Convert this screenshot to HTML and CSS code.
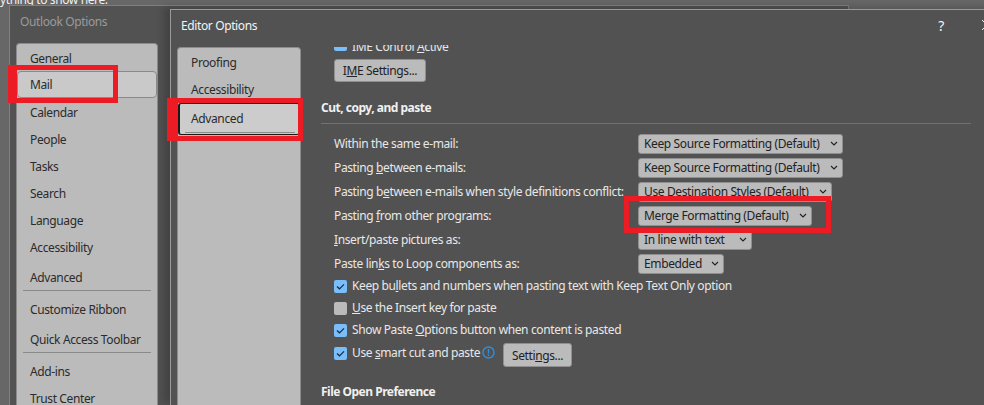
FILE: index.html
```html
<!DOCTYPE html>
<html lang="en">
<head>
<meta charset="utf-8">
<title>Editor Options</title>
<link rel="stylesheet" href="styles.css">
</head>
<body>
<div class="backdrop-text">ything to show here.</div>

<section class="window outlook">
  <header class="outlook-title">Outlook Options</header>
  <nav class="nav outlook-nav">
    <div class="nav-item">General</div>
    <div class="nav-item hovered">Mail</div>
    <div class="nav-item">Calendar</div>
    <div class="nav-item">People</div>
    <div class="nav-item">Tasks</div>
    <div class="nav-item">Search</div>
    <div class="nav-item">Language</div>
    <div class="nav-item">Accessibility</div>
    <div class="nav-item group-end">Advanced</div>
    <div class="nav-sep"></div>
    <div class="nav-item">Customize Ribbon</div>
    <div class="nav-item group-end">Quick Access Toolbar</div>
    <div class="nav-sep"></div>
    <div class="nav-item">Add-ins</div>
    <div class="nav-item">Trust Center</div>
  </nav>
</section>

<section class="window editor">
  <header class="editor-title">
    <span class="editor-name">Editor Options</span>
    <span class="help">?</span>
    <svg class="close" width="12" height="12" viewBox="0 0 12 12"><path d="M1 1l10 10M11 1L1 11" stroke="#f0f0f0" stroke-width="1" fill="none"/></svg>
  </header>
  <div class="editor-body">
    <nav class="nav editor-nav">
      <div class="nav-item">Proofing</div>
      <div class="nav-item">Accessibility</div>
      <div class="nav-item selected">Advanced</div>
    </nav>
    <div class="pane">
      <div class="pane-inner">
        <div class="check-row ime-row"><span class="box on"></span><span>IME Control <u>A</u>ctive</span></div>
        <button class="btn ime-btn">I<u>M</u>E Settings...</button>

        <h2 class="section-head">Cut, copy, and paste</h2>
        <div class="option-rows">
          <div class="opt-row"><span class="opt-label">Within the same e-mail:</span>
            <span class="select w-keep">Keep Source Formatting (Default)<svg class="chev" width="8" height="5" viewBox="0 0 8 5"><path d="M1 1l3 3 3-3" stroke="#222" stroke-width="1.1" fill="none"/></svg></span></div>
          <div class="opt-row"><span class="opt-label">Pasting <u>b</u>etween e-mails:</span>
            <span class="select w-keep">Keep Source Formatting (Default)<svg class="chev" width="8" height="5" viewBox="0 0 8 5"><path d="M1 1l3 3 3-3" stroke="#222" stroke-width="1.1" fill="none"/></svg></span></div>
          <div class="opt-row"><span class="opt-label">Pasting b<u>e</u>tween e-mails when style definitions conflict:</span>
            <span class="select w-dest">Use Destination Styles (Default)<svg class="chev" width="8" height="5" viewBox="0 0 8 5"><path d="M1 1l3 3 3-3" stroke="#222" stroke-width="1.1" fill="none"/></svg></span></div>
          <div class="opt-row"><span class="opt-label">Pasting <u>f</u>rom other programs:</span>
            <span class="select w-merge">Merge Formatting (Default)<svg class="chev" width="8" height="5" viewBox="0 0 8 5"><path d="M1 1l3 3 3-3" stroke="#222" stroke-width="1.1" fill="none"/></svg></span></div>
          <div class="opt-row"><span class="opt-label"><u>I</u>nsert/paste pictures as:</span>
            <span class="select w-inline">In line with text<svg class="chev" width="8" height="5" viewBox="0 0 8 5"><path d="M1 1l3 3 3-3" stroke="#222" stroke-width="1.1" fill="none"/></svg></span></div>
          <div class="opt-row"><span class="opt-label">Paste lin<u>k</u>s to Loop components as:</span>
            <span class="select w-embed">Embedded<svg class="chev" width="8" height="5" viewBox="0 0 8 5"><path d="M1 1l3 3 3-3" stroke="#222" stroke-width="1.1" fill="none"/></svg></span></div>
        </div>
        <div class="check-row first-check"><span class="box on"><svg width="13" height="13" viewBox="0 0 13 13"><path d="M3 6.5l2.5 2.3L10 4.3" stroke="#1a2a3a" stroke-width="1.2" fill="none"/></svg></span><span class="check-text">Keep bu<u>l</u>lets and numbers when pasting text with Keep Text Only option</span></div>
        <div class="check-row"><span class="box"></span><span class="check-text"><u>U</u>se the Insert key for paste</span></div>
        <div class="check-row"><span class="box on"><svg width="13" height="13" viewBox="0 0 13 13"><path d="M3 6.5l2.5 2.3L10 4.3" stroke="#1a2a3a" stroke-width="1.2" fill="none"/></svg></span><span class="check-text">Show Paste <u>O</u>ptions button when content is pasted</span></div>
        <div class="check-row smart-row"><span class="box on"><svg width="13" height="13" viewBox="0 0 13 13"><path d="M3 6.5l2.5 2.3L10 4.3" stroke="#1a2a3a" stroke-width="1.2" fill="none"/></svg></span><span class="check-text">Use <u>s</u>mart cut and paste</span>
          <svg class="info" width="13" height="13" viewBox="0 0 13 13"><circle cx="6.5" cy="6.5" r="5.5" stroke="#2f8fe0" stroke-width="1.4" fill="none"/><path d="M6.5 3v4.6M6.5 8.6v1.4" stroke="#2f8fe0" stroke-width="1.4"/></svg>
          <button class="btn settings-btn">Setti<u>n</u>gs...</button>
        </div>
        <h2 class="section-head file-head">File Open Preference</h2>
      </div>
    </div>
  </div>
</section>

<div class="mark mark-mail"></div>
<div class="mark mark-advanced"></div>
<div class="mark mark-merge"></div>
</body>
</html>
```
FILE: styles.css
```css
* { box-sizing: border-box; }
html, body { margin: 0; height: 100%; }
body {
  position: relative;
  width: 984px;
  height: 405px;
  overflow: hidden;
  background: #676767;
  font-family: "Noto Sans", "Open Sans", sans-serif;
  font-size: 12px;
  letter-spacing: -0.38px;
  color: #e8e8e8;
}
.backdrop-text {
  position: absolute;
  left: 0;
  top: -8px;
  font-size: 12px;
  line-height: 16px;
  color: #f0f0f0;
}
.window { position: absolute; }
.outlook {
  left: 9px;
  top: 5px;
  width: 840px;
  height: 400px;
  background: #525252;
  border: 1px solid #808080;
  border-bottom: 0;
}
.outlook-title {
  height: 37px;
  padding: 6px 0 0 10px;
  line-height: 20px;
  color: #9a9a9a;
}
.nav {
  background: #bbbbbb;
  border: 1px solid #8c8c8c;
  border-bottom: 0;
  border-radius: 4px 4px 0 0;
  color: #2b2b2b;
  display: flex;
  flex-direction: column;
}
.outlook-nav {
  width: 142px;
  height: 362px;
  margin-left: 6px;
}
.nav-item {
  height: 27px;
  line-height: 28px;
  padding-left: 13px;
  flex: none;
}
.outlook-nav .nav-item { line-height: 29px; }
.group-end { margin-top: 3px; }
.nav-sep {
  height: 1px;
  margin: 0 6px 4px;
  background: #8a8a8a;
  flex: none;
}
.outlook-nav .hovered {
  background: #c9c9c9;
  border: 1px solid #8a8a8a;
  border-radius: 4px;
  line-height: 26px;
  padding-left: 12px;
}
.editor {
  left: 170px;
  top: 9px;
  width: 830px;
  height: 396px;
  background: #525252;
  border: 1px solid #9a9a9a;
  border-bottom: 0;
  box-shadow: -6px -2px 8px rgba(0, 0, 0, 0.2);
}
.editor-title {
  height: 33px;
  display: flex;
  align-items: center;
  padding: 0 0 3px 10px;
  color: #f4f4f4;
}
.editor-name { flex: 1; }
.help { font-size: 14px; margin-right: 37px; }
.close { margin-right: 6px; flex: none; }
.editor-body {
  display: flex;
  height: 363px;
  padding-left: 6px;
}
.editor-nav {
  width: 124px;
  margin-top: 4px;
  padding-top: 1px;
  flex: none;
}
.selected {
  position: relative;
  background: #cccccc;
  border: 1px solid #1a1a1a;
  border-left-width: 2px;
  border-radius: 3px;
  height: 32px;
  line-height: 30px;
  padding-left: 11px;
}
.selected::after {
  content: "";
  position: absolute;
  left: 5px;
  right: 4px;
  bottom: 1px;
  height: 1px;
  background: #8a8a8a;
}
.pane {
  flex: 1;
  overflow: hidden;
  margin-top: 2px;
  padding: 0 28px 0 20px;
}
.pane-inner { margin-top: -10px; }
.check-row {
  display: flex;
  align-items: center;
  height: 22px;
  padding-left: 13px;
}
.check-text { padding-bottom: 2px; }
.box {
  width: 13px;
  height: 13px;
  flex: none;
  margin-right: 5px;
  background: #bbbbbb;
  border-radius: 2px;
  display: block;
}
.box svg { display: block; }
.box.on { background: #79bdfb; }
.ime-row .box {
  height: 4px;
  align-self: flex-start;
  margin-top: 12px;
  border-radius: 0 0 2px 2px;
}
.btn {
  font: inherit;
  letter-spacing: inherit;
  color: #222;
  background: #bbbbbb;
  border: 1px solid #8f8f8f;
  border-radius: 3px;
  padding: 0;
}
.ime-btn {
  display: block;
  width: 92px;
  height: 23px;
  margin: 2px 0 0 13px;
}
.section-head {
  margin: 0;
  font-size: 12px;
  font-weight: 700;
  letter-spacing: -0.5px;
  color: #f0f0f0;
  line-height: 17px;
}
.ime-btn + .section-head {
  margin-top: 17px;
  padding-bottom: 7px;
  border-bottom: 1px solid #727272;
}
.option-rows { margin-top: 8px; }
.opt-row {
  display: flex;
  align-items: center;
  height: 24px;
  padding-left: 13px;
}
.opt-label { width: 304px; flex: none; white-space: nowrap; padding-bottom: 2px; }
.select {
  display: flex;
  align-items: center;
  justify-content: space-between;
  height: 20px;
  padding: 0 4px 2px 5px;
  background: #bbbbbb;
  border: 1px solid #8f8f8f;
  border-radius: 3px;
  color: #222;
  white-space: nowrap;
}
.w-keep { width: 205px; }
.w-dest { width: 194px; }
.w-merge { width: 174px; }
.w-inline { width: 114px; }
.w-embed { width: 86px; }
.chev { flex: none; }
.first-check { margin-top: -1px; }
.info { margin: -2px 8px 0 2px; flex: none; }
.smart-row { height: 24px; }
.settings-btn { width: 69px; height: 24px; margin-top: 4px; }
.file-head { margin-top: 18px; }
.mark {
  position: absolute;
  border: 5px solid #ed1c24;
  pointer-events: none;
}
.mark-mail { left: 8px; top: 65px; width: 110px; height: 38px; border-left-width: 9px; }
.mark-advanced { left: 167px; top: 98px; width: 136px; height: 43px; border-left-width: 11px; }
.mark-merge { left: 624px; top: 196px; width: 207px; height: 37px; }
```
